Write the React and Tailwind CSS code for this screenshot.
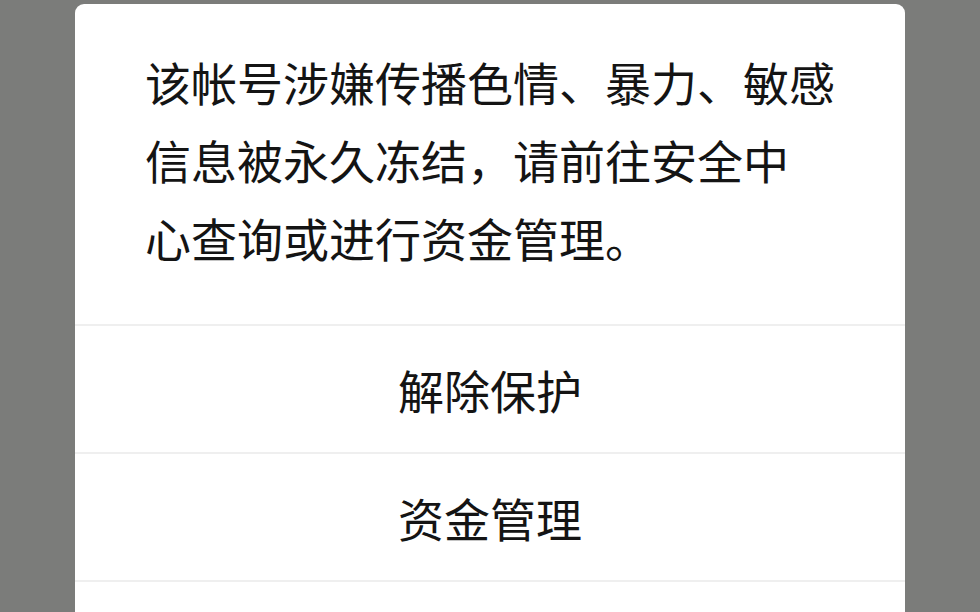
export default function App() {
  const actions = ['解除保护', '资金管理'];

  return (
    <div
      className="w-[980px] h-[612px] overflow-hidden bg-[#7b7c7a] pt-[4px]"
      style={{ fontFamily: '"Noto Sans CJK SC", "Noto Sans", sans-serif' }}
    >
      <div className="mx-[75px] w-[830px] bg-white rounded-t-[9px]">
        {/* message */}
        <div className="pl-[70px] pr-[60px] pt-[38px] pb-[48px] text-[46px] leading-[78px] text-[#141414]">
          <p>该帐号涉嫌传播色情、暴力、敏感</p>
          <p>信息被永久冻结，请前往安全中</p>
          <p>心查询或进行资金管理。</p>
        </div>

        {/* buttons */}
        {actions.map((label) => (
          <div
            key={label}
            className="h-[128px] border-t-[2px] border-[#efefef] flex items-center justify-center text-[46px] text-[#141414]"
          >
            {label}
          </div>
        ))}
        <div className="h-[40px] border-t-[2px] border-[#efefef]" />
      </div>
    </div>
  );
}
